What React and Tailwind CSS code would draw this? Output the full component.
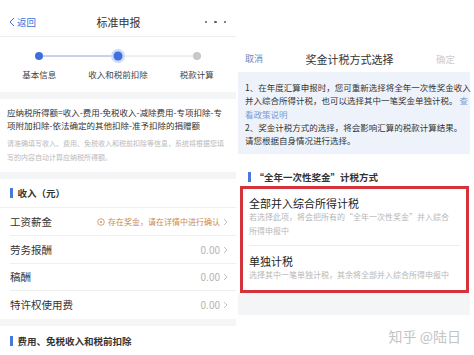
import React from "react";

const font = { fontFamily: '"Noto Sans CJK SC", "Noto Sans", sans-serif' };

function Chevron({ color = "#c4c4c4" }) {
  return (
    <svg width="5" height="8" viewBox="0 0 5 8" className="ml-[3px]">
      <polyline points="1,1 4,4 1,7" fill="none" stroke={color} strokeWidth="1" />
    </svg>
  );
}

function IncomeRow({ label, value, note, last }) {
  return (
    <div className="relative flex h-[29px] items-center justify-between pl-[10px] pr-[8px]">
      <span className="text-[10.5px] leading-[14px] text-[#333]">{label}</span>
      {note ? (
        <span className="flex items-center text-[8px] leading-[10px] text-[#c98a4f]">
          <svg width="8" height="8" viewBox="0 0 8 8" className="mr-[3px]">
            <circle cx="4" cy="4" r="3.3" fill="none" stroke="#c98a4f" strokeWidth="0.8" />
            <circle cx="4" cy="4" r="0.9" fill="#c98a4f" />
          </svg>
          {note}
          <Chevron />
        </span>
      ) : (
        <span className="flex items-center text-[10px] leading-[12px] text-[#b4b4b4]">
          {value}
          <Chevron />
        </span>
      )}
      {!last && <div className="absolute bottom-0 left-[10px] right-0 h-px bg-[#efefef]" />}
    </div>
  );
}

function SectionTitle({ children, h = "h-[28px]" }) {
  return (
    <div className={`flex ${h} items-center pl-[10px]`}>
      <span className="mr-[5px] h-[10px] w-[2.5px] bg-[#4a78de]" />
      <span className="text-[9.5px] font-bold leading-[12px] text-[#333]">{children}</span>
    </div>
  );
}

function LeftPanel() {
  return (
    <div className="flex w-[236px] flex-col bg-white">
      <div className="flex h-[38px] items-center justify-between border-b border-[#ececec] pl-[9px] pr-[8px] pt-[8px]">
        <div className="flex w-[60px] items-center text-[9.5px] leading-[12px] text-[#3c6fd6]">
          <svg width="6" height="10" viewBox="0 0 6 10" className="mr-[2px]">
            <polyline points="5,1 1,5 5,9" fill="none" stroke="#3c6fd6" strokeWidth="1" />
          </svg>
          返回
        </div>
        <span className="text-[11px] leading-[14px] text-[#333]">标准申报</span>
        <div className="flex w-[60px] justify-end gap-[7px] pr-[2px]">
          <span className="h-[2.5px] w-[2.5px] rounded-full bg-[#555b66]" />
          <span className="h-[2.5px] w-[2.5px] rounded-full bg-[#555b66]" />
          <span className="h-[2.5px] w-[2.5px] rounded-full bg-[#555b66]" />
        </div>
      </div>

      <div className="flex h-[57px] flex-col pt-[9px]">
        <svg width="236" height="20" viewBox="0 0 236 20">
          <line x1="39" y1="10" x2="118" y2="10" stroke="#8ea6d6" strokeWidth="1" />
          <line x1="118" y1="10" x2="197" y2="10" stroke="#dedede" strokeWidth="1" />
          <circle cx="39" cy="10" r="4" fill="#3e6fdc" />
          <circle cx="118" cy="10" r="7" fill="#cfdcf7" />
          <circle cx="118" cy="10" r="4.5" fill="#3e6fdc" />
          <circle cx="197" cy="10" r="4" fill="#c8c8c8" />
        </svg>
        <div className="mt-[2px] grid grid-cols-3 text-center text-[8.5px] leading-[12px] text-[#444]">
          <span>基本信息</span>
          <span>收入和税前扣除</span>
          <span>税款计算</span>
        </div>
      </div>

      <div className="h-[7px] bg-[#f4f5f7]" />

      <div className="whitespace-nowrap px-[7px] pb-[8px] pt-[7px]">
        <p className="text-[8.5px] leading-[13px] text-[#333]">应纳税所得额=收入-费用-免税收入-减除费用-专项扣除-专</p>
        <p className="text-[8.5px] leading-[13px] text-[#333]">项附加扣除-依法确定的其他扣除-准予扣除的捐赠额</p>
        <p className="mt-[4px] text-[7px] leading-[14px] text-[#b9b9b9]">
          请准确填写收入、费用、免税收入和税前扣除等信息，系统将根据您填
        </p>
        <p className="text-[7px] leading-[14px] text-[#b9b9b9]">写的内容自动计算应纳税所得额。</p>
      </div>

      <div className="h-[7px] bg-[#f4f5f7]" />

      <div className="border-b border-[#efefef]">
        <SectionTitle>收入（元）</SectionTitle>
      </div>
      <IncomeRow label="工资薪金" note="存在奖金，请在详情中进行确认" />
      <IncomeRow label="劳务报酬" value="0.00" />
      <IncomeRow label="稿酬" value="0.00" />
      <IncomeRow label="特许权使用费" value="0.00" last />

      <div className="h-[7px] bg-[#f4f5f7]" />
      <SectionTitle h="h-[30px]">费用、免税收入和税前扣除</SectionTitle>
    </div>
  );
}

function RightPanel() {
  return (
    <div className="ml-[2px] flex w-[232px] flex-col bg-white">
      <div className="h-[46px]" />
      <div className="flex h-[26px] items-center justify-between px-[7px]">
        <span className="text-[9px] leading-[12px] text-[#6d87b8]">取消</span>
        <span className="text-[11px] leading-[14px] text-[#333]">奖金计税方式选择</span>
        <span className="pr-[8px] text-[9.5px] leading-[12px] text-[#cdcdcd]">确定</span>
      </div>

      <div className="whitespace-nowrap bg-[#eef3fb] pb-[7px] pl-[7px] pr-[4px] pt-[9px] text-[8.5px] leading-[13.3px] text-[#333]">
        <p>1、在年度汇算申报时，您可重新选择将全年一次性奖金收入</p>
        <p>
          并入综合所得计税，也可以选择其中一笔奖金单独计税。 <span className="text-[#7c9bd2]">查</span>
        </p>
        <p className="text-[#7c9bd2]">看政策说明</p>
        <p>2、奖金计税方式的选择，将会影响汇算的税款计算结果。</p>
        <p>请您根据自身情况进行选择。</p>
      </div>

      <div className="flex items-center pb-[2px] pl-[10px] pt-[16px]">
        <span className="mr-[4px] h-[10px] w-[2.5px] bg-[#4a78de]" />
        <span className="text-[9.5px] font-bold leading-[14px] text-[#333]">“全年一次性奖金”计税方式</span>
      </div>

      <div className="ml-[2px] mr-[1px] border-[3px] border-[#d3343c] bg-white">
        <div className="px-[6px] pb-[7px] pt-[7px]">
          <p className="text-[11px] leading-[14px] text-[#222]">全部并入综合所得计税</p>
          <p className="text-[8px] leading-[14px] text-[#b8b8b8]">
            若选择此项，将会把所有的“全年一次性奖金”并入综合
          </p>
          <p className="text-[8px] leading-[14px] text-[#b8b8b8]">所得申报中</p>
        </div>
        <div className="mx-[6px] h-px bg-[#ededed]" />
        <div className="px-[6px] pb-[8px] pt-[8px]">
          <p className="text-[11px] leading-[14px] text-[#222]">单独计税</p>
          <p className="text-[8px] leading-[14px] text-[#b8b8b8]">
            选择其中一笔单独计税，其余将全部并入综合所得申报中
          </p>
        </div>
      </div>

      <div className="h-[22px] bg-[#f4f5f7]" />

      <div className="flex justify-end pr-[9px] pt-[12px]">
        <span className="text-[14px] leading-[18px] text-[#c4c4c4]">知乎 @陆日</span>
      </div>
    </div>
  );
}

export default function App() {
  return (
    <div className="flex h-[355px] w-[474px] overflow-hidden bg-white" style={font}>
      <LeftPanel />
      <RightPanel />
    </div>
  );
}
